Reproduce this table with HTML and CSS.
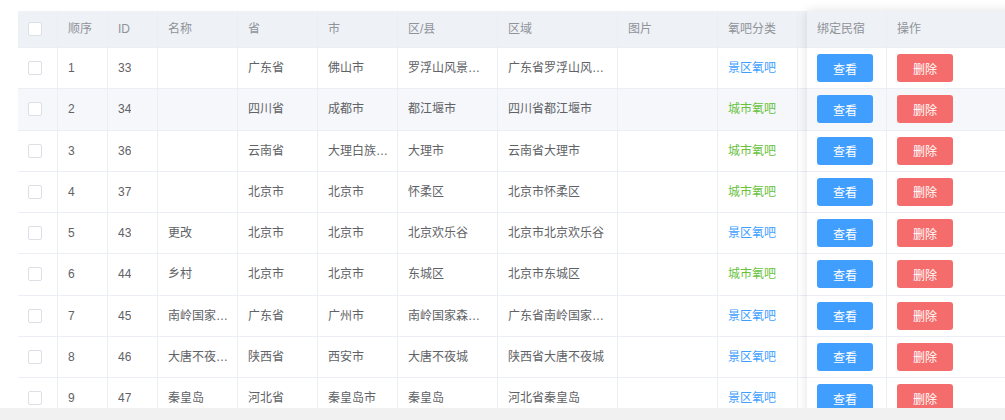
FILE: index.html
```html
<!DOCTYPE html>
<html lang="zh-CN">
<head>
<meta charset="utf-8">
<title>氧吧列表</title>
<link rel="stylesheet" href="styles.css">
</head>
<body>
<div class="page">
  <div class="viewport">
    <div class="main">
      <div class="row head">
        <div class="cell c-chk"><i class="chk"></i></div>
        <div class="cell c-seq"><span>顺序</span></div>
        <div class="cell c-id"><span>ID</span></div>
        <div class="cell c-name"><span>名称</span></div>
        <div class="cell c-prov"><span>省</span></div>
        <div class="cell c-city"><span>市</span></div>
        <div class="cell c-dist"><span>区/县</span></div>
        <div class="cell c-area"><span>区域</span></div>
        <div class="cell c-pic"><span>图片</span></div>
        <div class="cell c-cat"><span>氧吧分类</span></div>
        <div class="cell c-extra"></div>
      </div>
      <div class="row">
        <div class="cell c-chk"><i class="chk"></i></div>
        <div class="cell c-seq"><span>1</span></div>
        <div class="cell c-id"><span>33</span></div>
        <div class="cell c-name"><span></span></div>
        <div class="cell c-prov"><span>广东省</span></div>
        <div class="cell c-city"><span>佛山市</span></div>
        <div class="cell c-dist"><span>罗浮山风景名胜区</span></div>
        <div class="cell c-area"><span>广东省罗浮山风景名胜区</span></div>
        <div class="cell c-pic"><span></span></div>
        <div class="cell c-cat"><span class="blue">景区氧吧</span></div>
        <div class="cell c-extra"></div>
      </div>
      <div class="row hover">
        <div class="cell c-chk"><i class="chk"></i></div>
        <div class="cell c-seq"><span>2</span></div>
        <div class="cell c-id"><span>34</span></div>
        <div class="cell c-name"><span></span></div>
        <div class="cell c-prov"><span>四川省</span></div>
        <div class="cell c-city"><span>成都市</span></div>
        <div class="cell c-dist"><span>都江堰市</span></div>
        <div class="cell c-area"><span>四川省都江堰市</span></div>
        <div class="cell c-pic"><span></span></div>
        <div class="cell c-cat"><span class="green">城市氧吧</span></div>
        <div class="cell c-extra"></div>
      </div>
      <div class="row">
        <div class="cell c-chk"><i class="chk"></i></div>
        <div class="cell c-seq"><span>3</span></div>
        <div class="cell c-id"><span>36</span></div>
        <div class="cell c-name"><span></span></div>
        <div class="cell c-prov"><span>云南省</span></div>
        <div class="cell c-city"><span>大理白族自治州</span></div>
        <div class="cell c-dist"><span>大理市</span></div>
        <div class="cell c-area"><span>云南省大理市</span></div>
        <div class="cell c-pic"><span></span></div>
        <div class="cell c-cat"><span class="green">城市氧吧</span></div>
        <div class="cell c-extra"></div>
      </div>
      <div class="row">
        <div class="cell c-chk"><i class="chk"></i></div>
        <div class="cell c-seq"><span>4</span></div>
        <div class="cell c-id"><span>37</span></div>
        <div class="cell c-name"><span></span></div>
        <div class="cell c-prov"><span>北京市</span></div>
        <div class="cell c-city"><span>北京市</span></div>
        <div class="cell c-dist"><span>怀柔区</span></div>
        <div class="cell c-area"><span>北京市怀柔区</span></div>
        <div class="cell c-pic"><span></span></div>
        <div class="cell c-cat"><span class="green">城市氧吧</span></div>
        <div class="cell c-extra"></div>
      </div>
      <div class="row">
        <div class="cell c-chk"><i class="chk"></i></div>
        <div class="cell c-seq"><span>5</span></div>
        <div class="cell c-id"><span>43</span></div>
        <div class="cell c-name"><span>更改</span></div>
        <div class="cell c-prov"><span>北京市</span></div>
        <div class="cell c-city"><span>北京市</span></div>
        <div class="cell c-dist"><span>北京欢乐谷</span></div>
        <div class="cell c-area"><span>北京市北京欢乐谷</span></div>
        <div class="cell c-pic"><span></span></div>
        <div class="cell c-cat"><span class="blue">景区氧吧</span></div>
        <div class="cell c-extra"></div>
      </div>
      <div class="row">
        <div class="cell c-chk"><i class="chk"></i></div>
        <div class="cell c-seq"><span>6</span></div>
        <div class="cell c-id"><span>44</span></div>
        <div class="cell c-name"><span>乡村</span></div>
        <div class="cell c-prov"><span>北京市</span></div>
        <div class="cell c-city"><span>北京市</span></div>
        <div class="cell c-dist"><span>东城区</span></div>
        <div class="cell c-area"><span>北京市东城区</span></div>
        <div class="cell c-pic"><span></span></div>
        <div class="cell c-cat"><span class="green">城市氧吧</span></div>
        <div class="cell c-extra"></div>
      </div>
      <div class="row">
        <div class="cell c-chk"><i class="chk"></i></div>
        <div class="cell c-seq"><span>7</span></div>
        <div class="cell c-id"><span>45</span></div>
        <div class="cell c-name"><span>南岭国家森林公园</span></div>
        <div class="cell c-prov"><span>广东省</span></div>
        <div class="cell c-city"><span>广州市</span></div>
        <div class="cell c-dist"><span>南岭国家森林公园</span></div>
        <div class="cell c-area"><span>广东省南岭国家森林公园</span></div>
        <div class="cell c-pic"><span></span></div>
        <div class="cell c-cat"><span class="blue">景区氧吧</span></div>
        <div class="cell c-extra"></div>
      </div>
      <div class="row">
        <div class="cell c-chk"><i class="chk"></i></div>
        <div class="cell c-seq"><span>8</span></div>
        <div class="cell c-id"><span>46</span></div>
        <div class="cell c-name"><span>大唐不夜城景区</span></div>
        <div class="cell c-prov"><span>陕西省</span></div>
        <div class="cell c-city"><span>西安市</span></div>
        <div class="cell c-dist"><span>大唐不夜城</span></div>
        <div class="cell c-area"><span>陕西省大唐不夜城</span></div>
        <div class="cell c-pic"><span></span></div>
        <div class="cell c-cat"><span class="blue">景区氧吧</span></div>
        <div class="cell c-extra"></div>
      </div>
      <div class="row">
        <div class="cell c-chk"><i class="chk"></i></div>
        <div class="cell c-seq"><span>9</span></div>
        <div class="cell c-id"><span>47</span></div>
        <div class="cell c-name"><span>秦皇岛</span></div>
        <div class="cell c-prov"><span>河北省</span></div>
        <div class="cell c-city"><span>秦皇岛市</span></div>
        <div class="cell c-dist"><span>秦皇岛</span></div>
        <div class="cell c-area"><span>河北省秦皇岛</span></div>
        <div class="cell c-pic"><span></span></div>
        <div class="cell c-cat"><span class="blue">景区氧吧</span></div>
        <div class="cell c-extra"></div>
      </div>
    </div>
    <div class="fixed">
      <div class="row head">
        <div class="cell c-bind"><span>绑定民宿</span></div>
        <div class="cell c-op"><span>操作</span></div>
      </div>
      <div class="row">
        <div class="cell c-bind"><button class="btn btn-primary">查看</button></div>
        <div class="cell c-op"><button class="btn btn-danger">删除</button></div>
      </div>
      <div class="row hover">
        <div class="cell c-bind"><button class="btn btn-primary">查看</button></div>
        <div class="cell c-op"><button class="btn btn-danger">删除</button></div>
      </div>
      <div class="row">
        <div class="cell c-bind"><button class="btn btn-primary">查看</button></div>
        <div class="cell c-op"><button class="btn btn-danger">删除</button></div>
      </div>
      <div class="row">
        <div class="cell c-bind"><button class="btn btn-primary">查看</button></div>
        <div class="cell c-op"><button class="btn btn-danger">删除</button></div>
      </div>
      <div class="row">
        <div class="cell c-bind"><button class="btn btn-primary">查看</button></div>
        <div class="cell c-op"><button class="btn btn-danger">删除</button></div>
      </div>
      <div class="row">
        <div class="cell c-bind"><button class="btn btn-primary">查看</button></div>
        <div class="cell c-op"><button class="btn btn-danger">删除</button></div>
      </div>
      <div class="row">
        <div class="cell c-bind"><button class="btn btn-primary">查看</button></div>
        <div class="cell c-op"><button class="btn btn-danger">删除</button></div>
      </div>
      <div class="row">
        <div class="cell c-bind"><button class="btn btn-primary">查看</button></div>
        <div class="cell c-op"><button class="btn btn-danger">删除</button></div>
      </div>
      <div class="row">
        <div class="cell c-bind"><button class="btn btn-primary">查看</button></div>
        <div class="cell c-op"><button class="btn btn-danger">删除</button></div>
      </div>
    </div>
  </div>
  <div class="hbar"></div>
</div>
</body>
</html>
```

FILE: styles.css
```css
html, body {
  margin: 0;
  padding: 0;
  background: #fff;
}
body {
  font-family: "Liberation Sans", "Noto Sans CJK SC", sans-serif;
  font-size: 12px;
  color: #606266;
}
.page {
  width: 1005px;
  height: 420px;
  overflow: hidden;
  display: flex;
  flex-direction: column;
}
.viewport {
  flex: 1;
  min-height: 0;
  padding: 11px 0 0 18px;
  overflow: hidden;
  display: flex;
  align-items: flex-start;
}
.hbar {
  flex: none;
  height: 12px;
  background: #f1f1f1;
}
.main {
  flex: none;
  width: 789px;
  overflow: hidden;
}
.fixed {
  flex: none;
  width: 230px;
  background: #fff;
  box-shadow: 0 0 10px rgba(0, 0, 0, 0.12);
  position: relative;
  z-index: 1;
}
.row {
  display: flex;
  height: 41.25px;
  box-sizing: border-box;
  border-bottom: 1px solid #ebeef5;
  background: #fff;
}
.row.head {
  height: 37px;
  background: #eef1f6;
  color: #909399;
}
.row.hover {
  background: #f5f7fa;
}
.cell {
  flex: none;
  box-sizing: border-box;
  padding: 0 6px 0 10px;
  border-right: 1px solid #ebeef5;
  display: flex;
  align-items: center;
  overflow: hidden;
  white-space: nowrap;
}
.cell span {
  min-width: 0;
  overflow: hidden;
  text-overflow: ellipsis;
  white-space: nowrap;
  line-height: 20px;
}
.c-chk { width: 40px; }
.c-seq { width: 50px; }
.c-id { width: 50px; }
.c-name { width: 80px; }
.c-prov { width: 80px; }
.c-city { width: 80px; }
.c-dist { width: 100px; }
.c-area { width: 120px; }
.c-pic { width: 100px; }
.c-cat { width: 80px; }
.c-extra { width: 9px; padding: 0; border-right: 0; }
.c-bind { width: 80px; }
.c-op { width: 150px; }
.chk {
  display: block;
  width: 14px;
  height: 14px;
  box-sizing: border-box;
  border: 1px solid #dcdfe6;
  border-radius: 2px;
  background: #fff;
}
.blue { color: #409eff; }
.green { color: #67c23a; }
.btn {
  width: 56px;
  height: 28px;
  border: 0;
  border-radius: 3px;
  color: #fff;
  font-family: inherit;
  font-size: 12px;
  padding: 0;
  cursor: pointer;
}
.btn-primary { background: #409eff; }
.btn-danger { background: #f56c6c; }
```
